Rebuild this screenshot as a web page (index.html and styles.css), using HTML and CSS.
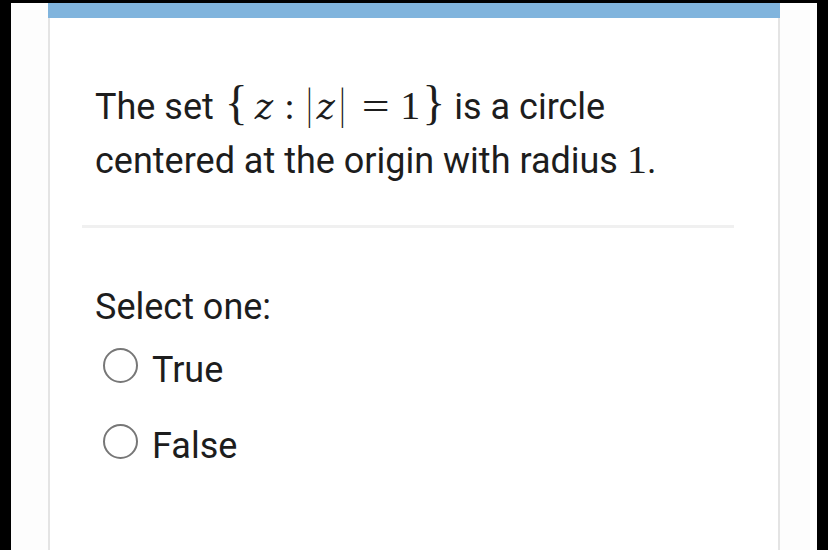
FILE: index.html
```html
<!DOCTYPE html>
<html>
<head>
<meta charset="utf-8">
<link rel="stylesheet" href="styles.css">
</head>
<body>
<div class="screen">
  <div class="card">
    <div class="topbar"></div>
    <div class="content">
      <p class="question">The set <span class="math"><span class="brace">{</span><span class="mi first">z</span><span class="mo colon">:</span><span class="bar">|</span><span class="mi inner">z</span><span class="bar close">|</span><span class="mo eq">=</span><span class="mn">1</span><span class="brace close">}</span></span> is a circle centered at the origin with radius <span class="num">1</span>.</p>
      <hr class="divider">
      <div class="prompt">Select one:</div>
      <div class="options">
        <label class="option"><span class="radio"></span><span class="label">True</span></label>
        <label class="option"><span class="radio"></span><span class="label">False</span></label>
      </div>
    </div>
  </div>
</div>
</body>
</html>
```
FILE: styles.css
```css
html, body {
  margin: 0;
  padding: 0;
  background: #000;
  height: 550px;
  overflow: hidden;
}
.screen {
  margin-left: 11px;
  width: 806px;
  height: 550px;
  background: #fdfdfd;
  padding-left: 37px;
  box-sizing: border-box;
}
.card {
  width: 732px;
  height: 550px;
  box-sizing: border-box;
  border-left: 2px solid #e4e4e4;
  border-right: 2px solid #e4e4e4;
  background: #fff;
}
.topbar {
  height: 15px;
  margin-top: 3px;
  margin-left: -2px;
  margin-right: -2px;
  background: #80b4dd;
}
.content {
  padding: 0 44px 0 45px;
  font-family: Roboto, "Liberation Sans", sans-serif;
  color: #1d1d1d;
  font-size: 36px;
}
.question {
  margin: 62px 0 0 0;
  line-height: 54px;
  width: 600px;
}
.math {
  font-family: "Liberation Serif", "DejaVu Serif", serif;
  font-size: 38px;
  line-height: 0;
}
.math span {
  display: inline-block;
  line-height: 0;
}
.brace {
  font-size: 48px;
  margin-left: 2px;
}
.brace.close { margin-left: 2px; }
.mi {
  font-family: "DejaVu Serif", "Liberation Serif", serif;
  font-style: italic;
  font-size: 35px;
  font-weight: 300;
}
.mi.first { margin-left: 7px; }
.mi.inner { margin-left: 3px; }
.colon { margin-left: 11px; }
.bar {
  font-size: 44px;
  margin-left: 10px;
  transform: scaleX(0.6);
}
.bar.close { margin-left: 3px; }
.eq {
  margin-left: 18px;
  transform: scaleX(1.3);
}
.mn {
  font-size: 40px;
  margin-left: 14px;
}
.num {
  font-family: "Liberation Serif", serif;
  font-size: 40px;
  line-height: 0;
}
.divider {
  border: 0;
  height: 3px;
  background: #f0f0f0;
  margin: 37px 0 0 -13px;
  width: 652px;
}
.prompt {
  margin-top: 59px;
  line-height: 40px;
}
.options {
  display: flex;
  flex-direction: column;
  gap: 34px;
  margin-top: 22px;
  padding-left: 8px;
}
.option {
  display: flex;
  align-items: flex-start;
  gap: 14px;
  height: 42px;
  line-height: 42px;
}
.radio {
  width: 35px;
  height: 35px;
  border: 2px solid #777;
  border-radius: 50%;
  box-sizing: border-box;
  margin-top: -1px;
}
```
